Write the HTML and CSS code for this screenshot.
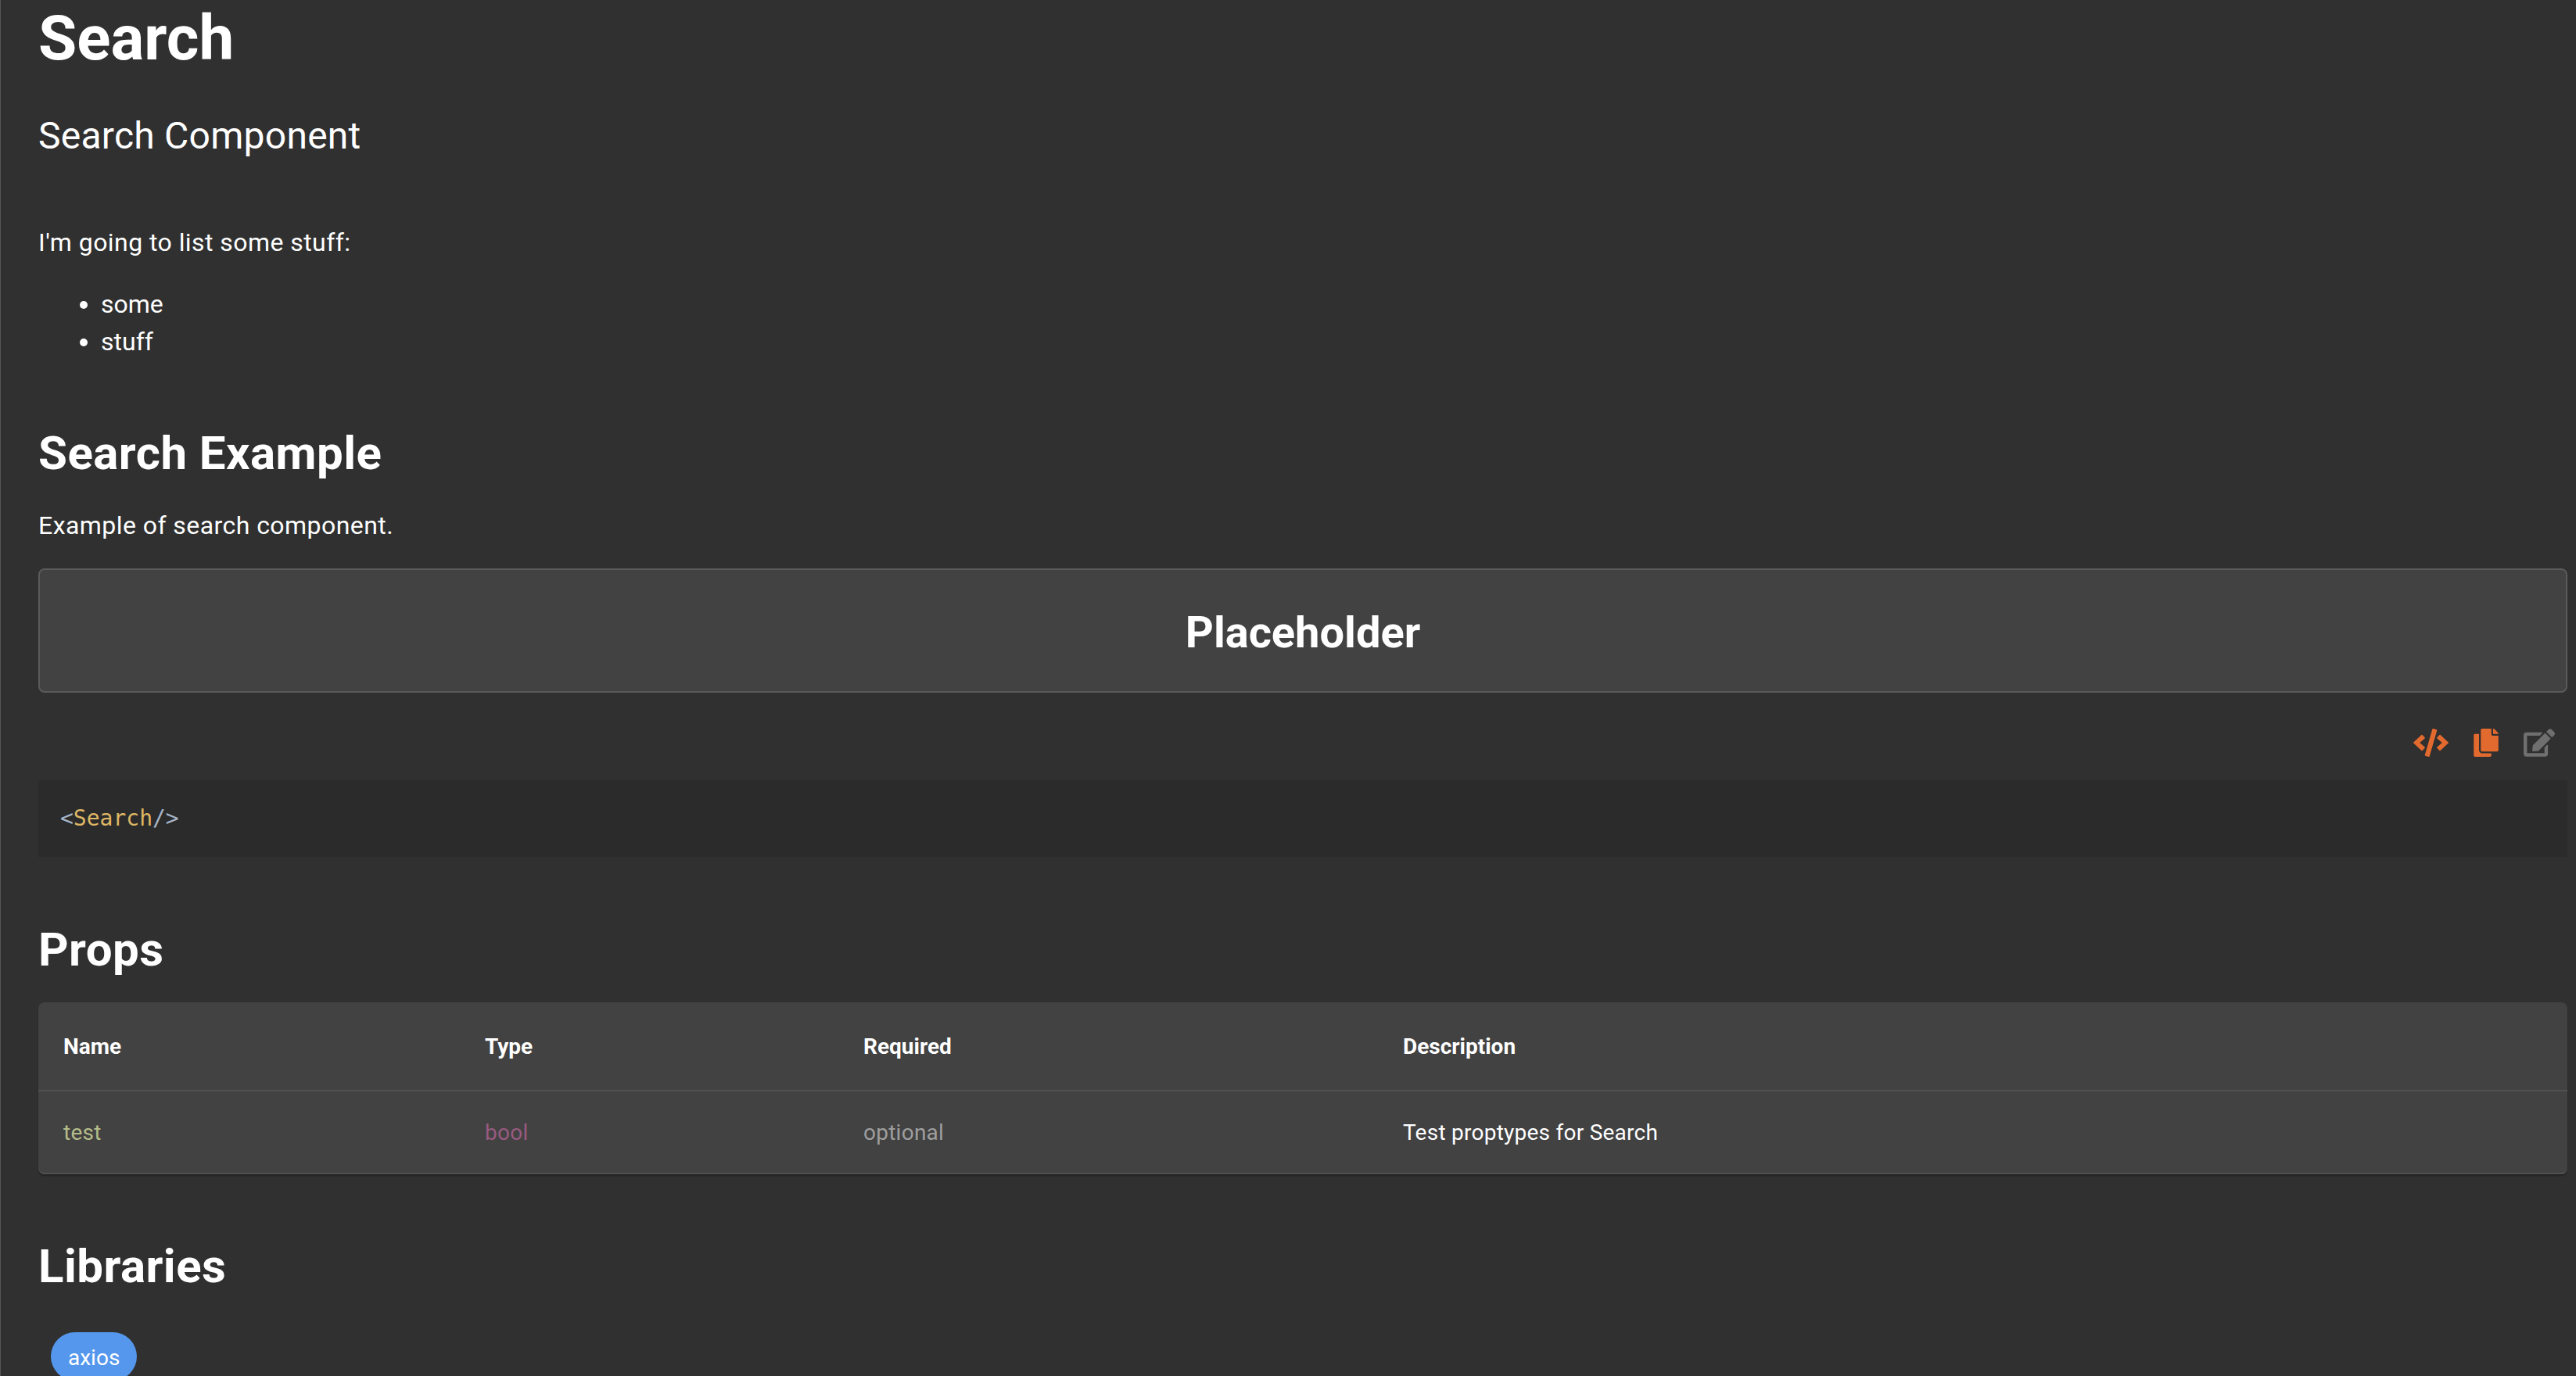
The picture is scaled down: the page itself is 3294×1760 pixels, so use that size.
FILE: index.html
```html
<!DOCTYPE html>
<html lang="en">
<head>
    <meta charset="UTF-8">
    <meta name="viewport" content="width=device-width, initial-scale=1.0">
    <title>Search</title>
    <link rel="stylesheet" href="styles.css">
</head>
<body>

<div class="page">
    <h1 class="title">Search</h1>
    <p class="subtitle">Search Component</p>

    <p class="text intro">I'm going to list some stuff:</p>
    <ul class="list">
        <li>some</li>
        <li>stuff</li>
    </ul>

    <h2 class="heading example-heading">Search Example</h2>
    <p class="text example-text">Example of search component.</p>

    <div class="preview">Placeholder</div>

    <div class="toolbar">
        <svg class="icon icon-code" viewBox="0 0 640 512"><path d="M278.9 511.5l-61-17.7c-6.4-1.8-10-8.5-8.2-14.9L346.2 8.7c1.8-6.4 8.5-10 14.9-8.2l61 17.7c6.4 1.8 10 8.5 8.2 14.9L293.8 503.3c-1.9 6.4-8.5 10.1-14.9 8.2zm-114-112.2l43.5-46.4c4.6-4.9 4.3-12.7-.8-17.2L117 256l90.6-79.7c5.1-4.5 5.5-12.3.8-17.2l-43.5-46.4c-4.5-4.8-12.1-5.1-17-.5L3.8 247.2c-5.1 4.7-5.1 12.8 0 17.5l144.1 135.1c4.9 4.6 12.5 4.4 17-.5zm327.2.6l144.1-135.1c5.1-4.7 5.1-12.8 0-17.5L492.1 112.1c-4.8-4.5-12.4-4.3-17 .5L431.6 159c-4.6 4.9-4.3 12.7.8 17.2L523 256l-90.6 79.7c-5.1 4.5-5.5 12.3-.8 17.2l43.5 46.4c4.5 4.9 12.1 5.1 17 .6z"/></svg>
        <svg class="icon icon-copy" viewBox="0 0 448 512"><path d="M320 448v40c0 13.255-10.745 24-24 24H24c-13.255 0-24-10.745-24-24V120c0-13.255 10.745-24 24-24h72v296c0 30.879 25.121 56 56 56h168zm0-344V0H152c-13.255 0-24 10.745-24 24v368c0 13.255 10.745 24 24 24h272c13.255 0 24-10.745 24-24V128H344c-13.2 0-24-10.8-24-24zm120.971-31.029L375.029 7.029A24 24 0 0 0 358.059 0H352v96h96v-6.059a24 24 0 0 0-7.029-16.97z"/></svg>
        <svg class="icon icon-edit" viewBox="0 0 576 512"><path d="M402.6 83.2l90.2 90.2c3.8 3.8 3.8 10 0 13.8L274.4 405.6l-92.8 10.3c-12.4 1.4-22.9-9.1-21.5-21.5l10.3-92.8L388.8 83.2c3.8-3.8 10-3.8 13.8 0zm162-22.9l-48.8-48.8c-15.2-15.2-39.9-15.2-55.2 0l-35.4 35.4c-3.8 3.8-3.8 10 0 13.8l90.2 90.2c3.8 3.8 10 3.8 13.8 0l35.4-35.4c15.2-15.3 15.2-40 0-55.2zM384 346.2V448H64V128h229.8c3.2 0 6.2-1.3 8.5-3.5l40-40c7.6-7.6 2.2-20.5-8.5-20.5H48C21.5 64 0 85.5 0 112v352c0 26.5 21.5 48 48 48h352c26.5 0 48-21.5 48-48V306.2c0-10.7-12.9-16-20.5-8.5l-40 40c-2.2 2.3-3.5 5.3-3.5 8.5z"/></svg>
    </div>

    <pre class="code"><span class="code-punct">&lt;</span><span class="code-tag">Search</span><span class="code-punct">/&gt;</span></pre>

    <h2 class="heading props-heading">Props</h2>

    <table class="props">
        <thead>
            <tr>
                <th class="col-name">Name</th>
                <th class="col-type">Type</th>
                <th class="col-required">Required</th>
                <th>Description</th>
            </tr>
        </thead>
        <tbody>
            <tr>
                <td class="prop-name">test</td>
                <td class="prop-type">bool</td>
                <td class="prop-required">optional</td>
                <td>Test proptypes for Search</td>
            </tr>
        </tbody>
    </table>

    <h2 class="heading libraries-heading">Libraries</h2>

    <div class="libraries">
        <span class="chip">axios</span>
    </div>
</div>

</body>
</html>
```

FILE: styles.css
```css
html, body {
    margin: 0;
    height: 100%;
    overflow: hidden;
}
body {
    background-color: #303030;
    color: #fff;
    font-family: Roboto, "Liberation Sans", sans-serif;
}
.page {
    height: 1760px;
    border-left: 1px solid #555;
    padding: 0 11px 0 48px;
    box-sizing: border-box;
    overflow: hidden;
}
.title {
    margin: 0;
    padding-top: 2px;
    font-size: 80px;
    line-height: 94px;
    font-weight: 700;
}
.subtitle {
    margin: 50px 0 0;
    font-size: 48px;
    line-height: 56px;
    font-weight: 400;
    letter-spacing: 0.25px;
}
.text {
    margin: 0;
    font-size: 32px;
    line-height: 48px;
    font-weight: 400;
    letter-spacing: 0.44px;
}
.intro {
    margin-top: 84px;
}
.list {
    margin: 31px 0 0;
    padding-left: 80px;
    font-size: 32px;
    line-height: 48px;
    font-weight: 400;
}
.heading {
    margin: 0;
    font-size: 60px;
    line-height: 70px;
    font-weight: 700;
    letter-spacing: 0.45px;
}
.example-heading {
    margin-top: 84px;
}
.example-text {
    margin-top: 33px;
}
.preview {
    margin-top: 31px;
    height: 159px;
    box-sizing: border-box;
    display: flex;
    align-items: center;
    justify-content: center;
    padding-top: 4px;
    background-color: #424242;
    border: 2px solid #5a5a5a;
    border-radius: 8px;
    font-size: 56px;
    font-weight: 700;
}
.toolbar {
    display: flex;
    justify-content: flex-end;
    align-items: center;
    gap: 32px;
    margin-top: 46px;
    padding-right: 16px;
}
.icon {
    display: block;
    height: 36px;
    fill: #e36a2e;
}
.icon-code {
    width: 45px;
}
.icon-copy {
    width: 32px;
}
.icon-edit {
    width: 40px;
    fill: #6f6f6f;
}
.code {
    margin: 30px 0 0;
    height: 98px;
    box-sizing: border-box;
    padding: 0 28px;
    background-color: #2b2b2b;
    font-family: "DejaVu Sans Mono", monospace;
    font-size: 28px;
    line-height: 98px;
}
.code-punct {
    color: #a6b5c8;
}
.code-tag {
    color: #dfb765;
}
.props-heading {
    margin-top: 84px;
}
.props {
    width: 100%;
    margin-top: 32px;
    border-collapse: separate;
    border-spacing: 0;
    background-color: #424242;
    border-radius: 8px;
    box-shadow: 0 2px 2px rgba(0, 0, 0, 0.3);
    font-size: 28px;
    table-layout: fixed;
}
.props th {
    height: 114px;
    padding: 0 0 0 32px;
    text-align: left;
    font-weight: 700;
    border-bottom: 2px solid #515151;
    box-sizing: border-box;
}
.props td {
    height: 106px;
    padding: 0 0 0 32px;
    font-weight: 400;
    letter-spacing: 0.25px;
    border-bottom: 2px solid #515151;
    box-sizing: border-box;
}
.props tbody tr:last-child td:first-child {
    border-bottom-left-radius: 8px;
}
.props tbody tr:last-child td:last-child {
    border-bottom-right-radius: 8px;
}
.col-name {
    width: 539px;
}
.col-type {
    width: 484px;
}
.col-required {
    width: 690px;
}
.prop-name {
    color: #b5bd89;
}
.prop-type {
    color: #985a80;
}
.prop-required {
    color: #9e9e9e;
}
.libraries-heading {
    margin-top: 83px;
}
.libraries {
    display: flex;
    margin-top: 49px;
    padding-left: 16px;
}
.chip {
    padding: 16px 22px 12px;
    background-color: #5597ec;
    border-radius: 34px;
    font-size: 28px;
    line-height: 34px;
    font-weight: 400;
}
```
